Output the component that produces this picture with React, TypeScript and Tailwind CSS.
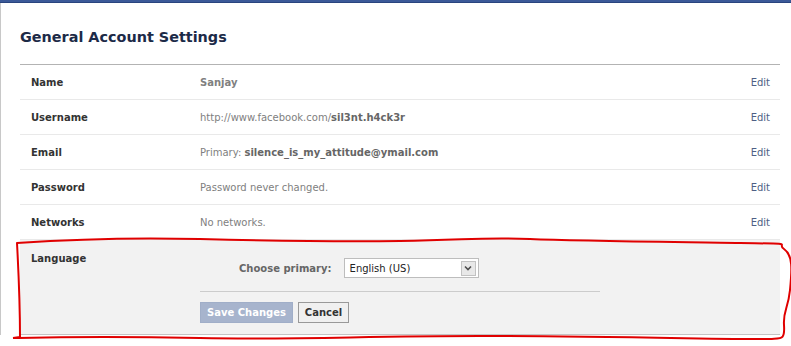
const rows = [
  { label: 'Name', value: <span className="font-bold text-[#808080]">Sanjay</span> },
  {
    label: 'Username',
    value: (
      <span>
        http://www.facebook.com/<span className="font-bold text-[#666]">sil3nt.h4ck3r</span>
      </span>
    ),
  },
  {
    label: 'Email',
    value: (
      <span>
        Primary: <span className="font-bold text-[#666]">silence_is_my_attitude@ymail.com</span>
      </span>
    ),
  },
  { label: 'Password', value: <span>Password never changed.</span> },
  { label: 'Networks', value: <span>No networks.</span> },
];

function Outline() {
  // hand-drawn red annotation over the language row
  return (
    <svg className="pointer-events-none absolute left-0 top-0" width="791" height="346">
      <path
        d="M13,338 L20,337 C20,310 19,280 17,243 C60,240 120,237 200,239 S330,242 400,241 S480,237 530,239 S680,242 740,243 S775,243 784,249 S792,270 790,290 S783,310 784,325 S782,338 770,339 S600,336 480,336 S300,340 200,338 S60,337 13,338"
        fill="none"
        stroke="#e00000"
        strokeWidth="2"
        strokeLinejoin="round"
      />
    </svg>
  );
}

export default function App() {
  return (
    <div className="relative h-[346px] w-[791px] overflow-hidden bg-white font-['DejaVu_Sans',sans-serif] text-[10px] text-[#333]">
      <div className="h-[3px] bg-[#3b5998] border-b border-[#29447e]" />
      <div className="h-[332px] border-l border-[#c8c8c8] pl-[19px]">
        <h2 className="pt-[24px] pb-[17px] text-[14.4px] font-bold leading-[20px] text-[#1c2a47]">
          General Account Settings
        </h2>
        <div className="w-[760px] border-t border-[#b3b3b3]">
          {rows.map(r => (
            <div key={r.label} className="flex h-[35px] items-center border-b border-[#e9e9e9] pl-[11px] pr-[10px]">
              <div className="w-[169px] font-bold">{r.label}</div>
              <div className="flex-1 text-[#808080]">{r.value}</div>
              <a className="text-[#4e5f85]">Edit</a>
            </div>
          ))}
          <div className="flex h-[95px] border-b border-[#c4c4c4] bg-[#f2f2f2] pl-[11px]">
            <div className="w-[169px] pt-[11px] font-bold">Language</div>
            <div className="w-[400px] pt-[18px]">
              <div className="flex items-center pl-[39px]">
                <span className="mr-[12px] font-bold text-[#666]">Choose primary:</span>
                <div className="flex h-[20px] w-[135px] items-center justify-between border border-[#bdbdbd] bg-white pl-[5px] pr-[2px] text-[#222]">
                  <span>English (US)</span>
                  <span className="flex h-[15px] w-[15px] items-center justify-center border border-[#c2c2c2] bg-[#e8e8e8]">
                    <svg width="8" height="6" viewBox="0 0 8 6">
                      <path d="M1,1.5 L4,4.5 L7,1.5" fill="none" stroke="#4d4d4d" strokeWidth="1.6" />
                    </svg>
                  </span>
                </div>
              </div>
              <div className="mt-[13px] border-t border-[#ccc]" />
              <div className="mt-[10px] flex gap-[5px]">
                <button className="h-[21px] w-[93px] border border-[#a0aec8] bg-[#a7b4cd] font-bold text-white">
                  Save Changes
                </button>
                <button className="h-[21px] w-[51px] border border-[#999] bg-[#f0f0f0] font-bold text-[#333]">
                  Cancel
                </button>
              </div>
            </div>
          </div>
        </div>
      </div>
      <Outline />
    </div>
  );
}
